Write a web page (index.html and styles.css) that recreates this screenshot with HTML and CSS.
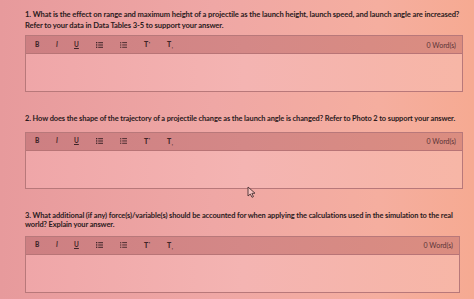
FILE: index.html
```html
<!DOCTYPE html>
<html>
<head>
<meta charset="utf-8">
<link rel="stylesheet" href="styles.css">
</head>
<body>
<main class="page">
  <section class="question q1">
    <p class="prompt">1. What is the effect on range and maximum height of a projectile as the launch height, launch speed, and launch angle are increased?<br>Refer to your data in Data Tables 3-5 to support your answer.</p>
    <div class="editor">
      <div class="toolbar">
        <span class="tool b">B</span>
        <span class="tool i">I</span>
        <span class="tool u">U</span>
        <span class="tool list"><svg width="7" height="6" viewBox="0 0 7 6"><rect x="0" y="0" width="1.3" height="1.3"/><rect x="0" y="2.3" width="1.3" height="1.3"/><rect x="0" y="4.6" width="1.3" height="1.3"/><rect x="2.2" y="0.2" width="4.8" height="1"/><rect x="2.2" y="2.5" width="4.8" height="1"/><rect x="2.2" y="4.8" width="4.8" height="1"/></svg></span>
        <span class="tool list"><svg width="7" height="6" viewBox="0 0 7 6"><rect x="0.3" y="0" width="0.9" height="1.4"/><rect x="0.3" y="2.3" width="0.9" height="1.4"/><rect x="0.3" y="4.6" width="0.9" height="1.4"/><rect x="2.2" y="0.2" width="4.8" height="0.9"/><rect x="2.2" y="2.5" width="4.8" height="0.9"/><rect x="2.2" y="4.8" width="4.8" height="0.9"/></svg></span>
        <span class="tool tt">T<span class="mark up">'</span></span>
        <span class="tool tt">T<span class="mark down">,</span></span>
        <span class="count">0 Word(s)</span>
      </div>
      <div class="area"></div>
    </div>
  </section>
  <section class="question q2">
    <p class="prompt">2. How does the shape of the trajectory of a projectile change as the launch angle is changed? Refer to Photo 2 to support your answer.</p>
    <div class="editor">
      <div class="toolbar">
        <span class="tool b">B</span>
        <span class="tool i">I</span>
        <span class="tool u">U</span>
        <span class="tool list"><svg width="7" height="6" viewBox="0 0 7 6"><rect x="0" y="0" width="1.3" height="1.3"/><rect x="0" y="2.3" width="1.3" height="1.3"/><rect x="0" y="4.6" width="1.3" height="1.3"/><rect x="2.2" y="0.2" width="4.8" height="1"/><rect x="2.2" y="2.5" width="4.8" height="1"/><rect x="2.2" y="4.8" width="4.8" height="1"/></svg></span>
        <span class="tool list"><svg width="7" height="6" viewBox="0 0 7 6"><rect x="0.3" y="0" width="0.9" height="1.4"/><rect x="0.3" y="2.3" width="0.9" height="1.4"/><rect x="0.3" y="4.6" width="0.9" height="1.4"/><rect x="2.2" y="0.2" width="4.8" height="0.9"/><rect x="2.2" y="2.5" width="4.8" height="0.9"/><rect x="2.2" y="4.8" width="4.8" height="0.9"/></svg></span>
        <span class="tool tt">T<span class="mark up">'</span></span>
        <span class="tool tt">T<span class="mark down">,</span></span>
        <span class="count">0 Word(s)</span>
      </div>
      <div class="area"></div>
    </div>
  </section>
  <section class="question q3">
    <p class="prompt">3. What additional (if any) force(s)/variable(s) should be accounted for when applying the calculations used in the simulation to the real<br>world? Explain your answer.</p>
    <div class="editor">
      <div class="toolbar">
        <span class="tool b">B</span>
        <span class="tool i">I</span>
        <span class="tool u">U</span>
        <span class="tool list"><svg width="7" height="6" viewBox="0 0 7 6"><rect x="0" y="0" width="1.3" height="1.3"/><rect x="0" y="2.3" width="1.3" height="1.3"/><rect x="0" y="4.6" width="1.3" height="1.3"/><rect x="2.2" y="0.2" width="4.8" height="1"/><rect x="2.2" y="2.5" width="4.8" height="1"/><rect x="2.2" y="4.8" width="4.8" height="1"/></svg></span>
        <span class="tool list"><svg width="7" height="6" viewBox="0 0 7 6"><rect x="0.3" y="0" width="0.9" height="1.4"/><rect x="0.3" y="2.3" width="0.9" height="1.4"/><rect x="0.3" y="4.6" width="0.9" height="1.4"/><rect x="2.2" y="0.2" width="4.8" height="0.9"/><rect x="2.2" y="2.5" width="4.8" height="0.9"/><rect x="2.2" y="4.8" width="4.8" height="0.9"/></svg></span>
        <span class="tool tt">T<span class="mark up">'</span></span>
        <span class="tool tt">T<span class="mark down">,</span></span>
        <span class="count">0 Word(s)</span>
      </div>
      <div class="area"></div>
    </div>
  </section>
  <svg class="cursor" width="9" height="12" viewBox="0 0 9 12">
    <path d="M1 1 L1 10 L3.3 8 L5 11.3 L6.5 10.6 L4.9 7.4 L8 7.2 Z" fill="#f6c2bf" stroke="#4a3234" stroke-width="0.9" stroke-linejoin="round"/>
  </svg>
</main>
</body>
</html>
```

FILE: styles.css
```css
html, body {
  margin: 0;
  padding: 0;
}
body {
  width: 474px;
  height: 299px;
  overflow: hidden;
  background: linear-gradient(90deg, #e79a9c 0%, #efa7a5 45%, #f5ae9f 80%, #f6aa92 100%);
  font-family: Lato, "Open Sans", sans-serif;
  color: #2b1a1c;
}
.page {
  position: relative;
  display: flex;
  flex-direction: column;
  padding: 9px 11px 0 25px;
}
.question {
  display: flex;
  flex-direction: column;
}
.q2 { margin-top: 22px; }
.q3 { margin-top: 22px; }
.prompt {
  margin: 0 0 5px 0;
  font-size: 7.6px;
  font-weight: 700;
  line-height: 10.5px;
  letter-spacing: -0.1px;
  white-space: nowrap;
}
.q2 .prompt { margin-bottom: 7px; font-size: 7.45px; }
.q3 .prompt { line-height: 9.5px; margin-bottom: 6px; font-size: 7.45px; }
.q3 .editor { margin-right: 3px; }
.editor {
  display: flex;
  flex-direction: column;
  border: 1px solid #b8787a;
}
.toolbar {
  height: 17px;
  display: flex;
  align-items: center;
  padding: 0 6px 0 9px;
  background: linear-gradient(90deg, #cd7f82 0%, #d48887 50%, #db8d80 100%);
  border-bottom: 1px solid #b87476;
  font-size: 6.5px;
  font-weight: 900;
  color: #3f2528;
}
.tool {
  flex: none;
  display: block;
  line-height: 8px;
}
.tool svg { fill: #3f2528; display: block; }
.tool.b { width: 21px; font-size: 6.5px; }
.tool.i { width: 18px; font-style: italic; font-weight: 700; }
.tool.u { width: 22px; text-decoration: underline; font-weight: 700; }
.tool.list { width: 24px; }
.tool.tt { width: 23px; font-size: 7px; }
.mark {
  display: inline-block;
  font-size: 6px;
  margin-left: 0.5px;
  position: relative;
}
.mark.up { top: -1.5px; }
.mark.down { top: 1px; font-size: 5px; }
.count {
  margin-left: auto;
  font-size: 7px;
  font-weight: 400;
  color: #5a3336;
}
.area {
  height: 37px;
  background: linear-gradient(90deg, #efa6a8 0%, #f4b4b2 50%, #f7b6a6 100%);
}
.cursor {
  position: absolute;
  left: 247px;
  top: 186px;
}
```
